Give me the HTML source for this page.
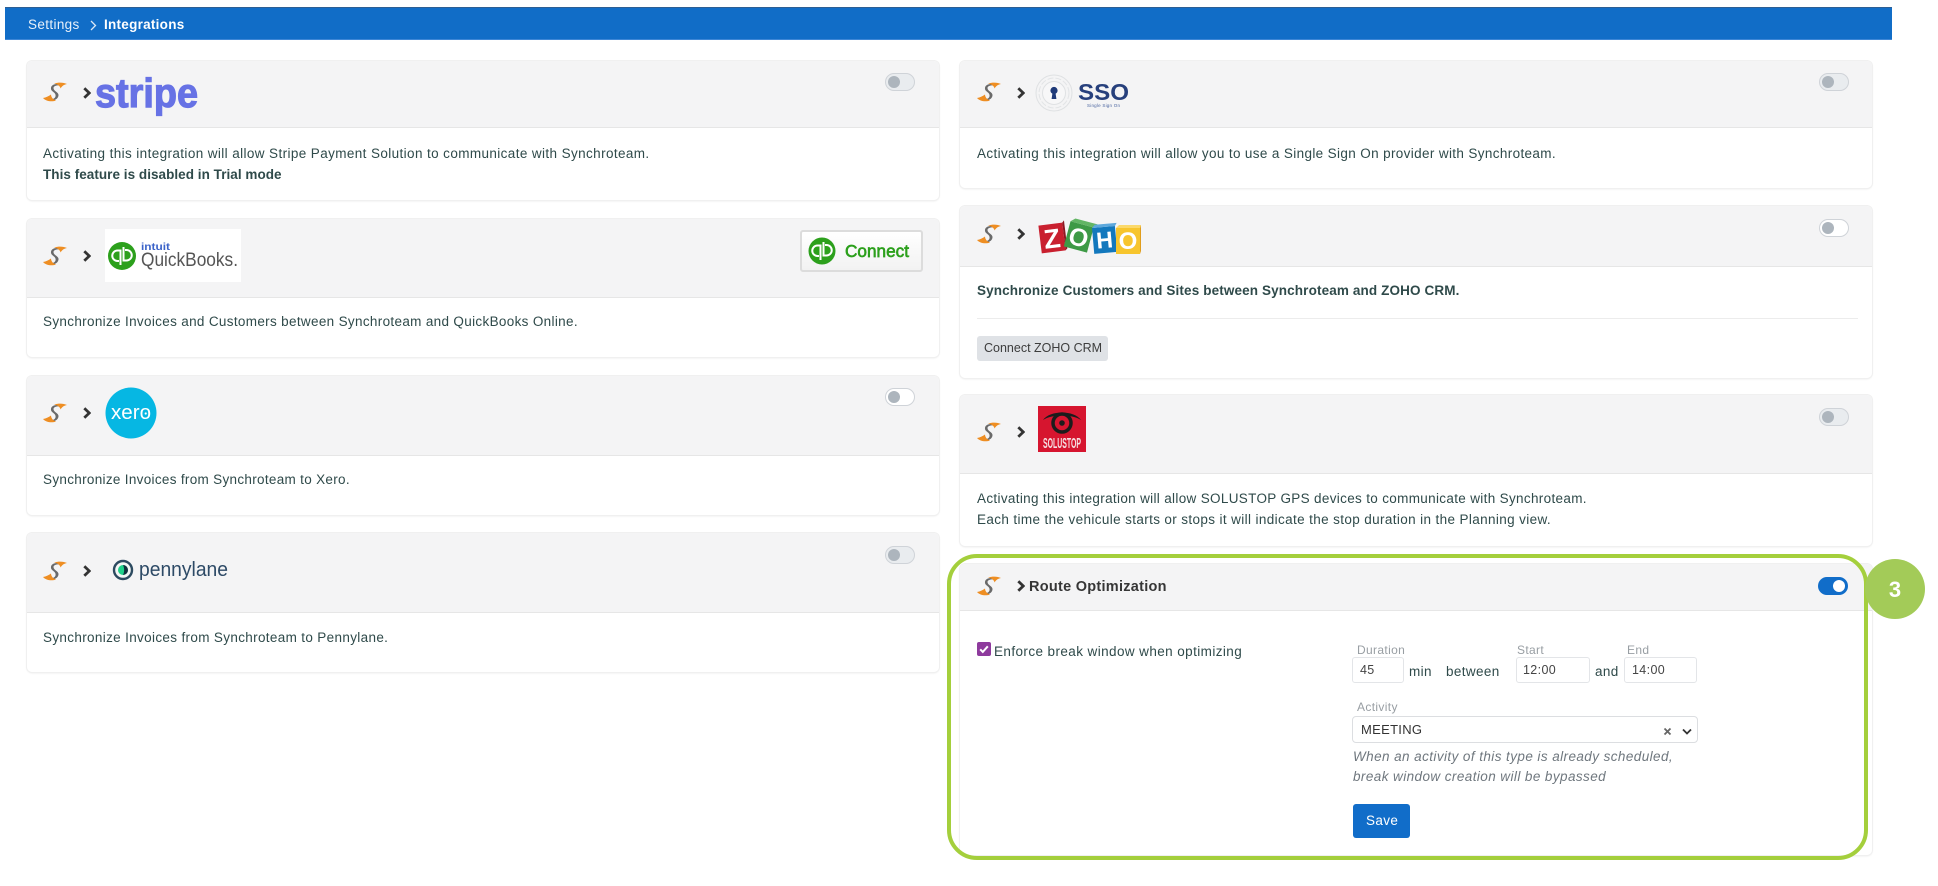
<!DOCTYPE html>
<html lang="en"><head><meta charset="utf-8"><title>Settings - Integrations</title>
<style>
html,body{margin:0;padding:0;background:#fff}
body{width:1938px;height:886px;position:relative;overflow:hidden;font-family:"Liberation Sans",sans-serif;font-size:13.5px;color:#2f4a4a}
#w{position:absolute;left:0;top:0;width:1938px;height:886px;filter:blur(.35px)}
.t{position:absolute;white-space:nowrap;line-height:20px;height:20px;letter-spacing:.36px}
.b{font-weight:700}
.card{position:absolute;background:#fff;border-radius:5px;box-shadow:0 0 0 1px #f0f0f0,0 1px 2px rgba(0,0,0,.1);overflow:hidden;box-sizing:border-box}
.card i{display:block;position:absolute;left:0;right:0;top:0;background:#f4f4f5;border-bottom:1px solid #e6e6e6;box-sizing:border-box}
.tg{position:absolute;width:30px;height:18px;box-sizing:border-box;border-radius:9px;background:#e9ecef;border:1px solid #cfd3d8}
.tg:after{content:"";position:absolute;left:2px;top:2px;width:12px;height:12px;border-radius:50%;background:#adb5bd}
.tg.w{background:#fff}
.tg.on{background:#116dc9;border-color:#116dc9}
.tg.on:after{left:14px;background:#fff}
.abs,svg{position:absolute}
.s{width:24px;height:20px}
.c{width:8px;height:12px}
.in{position:absolute;box-sizing:border-box;height:26px;background:#fff;border:1px solid #e3e5e8;border-radius:3px}
.lb{color:#989ea3;font-size:12px;letter-spacing:.35px}
.ih{color:#6f777e;font-style:italic;font-size:13.5px;letter-spacing:.42px}
.ctl{color:#444;font-size:12.5px}
</style></head>
<body>
<svg width="0" height="0" style="position:absolute">
<symbol id="sl" viewBox="0 0 24 20">
<path d="M17.500 2.500C12 1 7.500 3 8 7C8.500 10 13.500 10.500 12.500 14.500C11.500 17.500 7 18 4 17L5.500 18C10 19.500 15 17.500 15.500 13.500C16 10 10.500 9.500 10.500 6C10.500 3.500 15 3 17 3.500Z" fill="#6a6a6a"/>
<path d="M11 1.500C16 0 21 .5 24 2C21 2.500 19 4 17.500 6.500C17.500 4.500 14.500 2 11 1.500Z" fill="#ee8e23"/>
<path d="M0 16C3 15.500 6 14 8 12.500C8 15 10 17.500 13 18.500C9 20 3 19.500 0 16Z" fill="#ee8e23"/>
</symbol>
<symbol id="ch" viewBox="0 0 8 12"><path d="M1.300 1.200L6.300 6L1.300 10.800" fill="none" stroke="#333" stroke-width="2.800"/></symbol>
</svg>
<div id="w">
<!-- top bar -->
<div class="abs" style="left:5px;top:7px;width:1887px;height:33px;background:#116dc7;box-sizing:border-box;border-top:1px solid #2d5f94;border-bottom:1px solid #3d86d6"></div>
<div class="t" style="left:28px;top:15px;color:#e9f1fa">Settings</div>
<svg style="left:90px;top:20px" width="7" height="11" viewBox="0 0 7 11"><path d="M1 1l4.500 4.500L1 10" fill="none" stroke="#dbe8f6" stroke-width="1.300"/></svg>
<div class="t b" style="left:104px;top:15px;color:#fff;letter-spacing:.27px">Integrations</div>

<!-- left column -->
<div class="card" style="left:27px;top:61px;width:912px;height:139px"><i style="height:67px"></i></div>
<div class="card" style="left:27px;top:219px;width:912px;height:138px"><i style="height:79px"></i></div>
<div class="card" style="left:27px;top:376px;width:912px;height:139px"><i style="height:80px"></i></div>
<div class="card" style="left:27px;top:533px;width:912px;height:139px"><i style="height:80px"></i></div>
<!-- right column -->
<div class="card" style="left:960px;top:61px;width:912px;height:127px"><i style="height:67px"></i></div>
<div class="card" style="left:960px;top:206px;width:912px;height:172px"><i style="height:61px"></i></div>
<div class="card" style="left:960px;top:395px;width:912px;height:151px"><i style="height:79px"></i></div>
<div class="card" style="left:960px;top:564px;width:912px;height:291px"><i style="height:47px"></i></div>

<!-- S logos + chevrons -->
<svg class="s" style="left:43px;top:82px"><use href="#sl"/></svg><svg class="c" style="left:83px;top:87px"><use href="#ch"/></svg>
<svg class="s" style="left:43px;top:246px"><use href="#sl"/></svg><svg class="c" style="left:83px;top:250px"><use href="#ch"/></svg>
<svg class="s" style="left:43px;top:403px"><use href="#sl"/></svg><svg class="c" style="left:83px;top:407px"><use href="#ch"/></svg>
<svg class="s" style="left:43px;top:561px"><use href="#sl"/></svg><svg class="c" style="left:83px;top:565px"><use href="#ch"/></svg>
<svg class="s" style="left:977px;top:82px"><use href="#sl"/></svg><svg class="c" style="left:1017px;top:87px"><use href="#ch"/></svg>
<svg class="s" style="left:977px;top:224px"><use href="#sl"/></svg><svg class="c" style="left:1017px;top:228px"><use href="#ch"/></svg>
<svg class="s" style="left:977px;top:422px"><use href="#sl"/></svg><svg class="c" style="left:1017px;top:426px"><use href="#ch"/></svg>
<svg class="s" style="left:977px;top:576px"><use href="#sl"/></svg><svg class="c" style="left:1017px;top:580px"><use href="#ch"/></svg>

<!-- stripe -->
<svg style="left:90px;top:65px" width="115" height="55"><text x="5" y="42" font-family="Liberation Sans" font-weight="700" font-size="41" fill="#6772e5" stroke="#6772e5" stroke-width="1.200" textLength="103" lengthAdjust="spacingAndGlyphs">stripe</text></svg>

<!-- quickbooks -->
<div class="abs" style="left:105px;top:229px;width:136px;height:53px;background:#fff"></div>
<svg style="left:105px;top:229px" width="136" height="53">
<circle cx="17" cy="27" r="14" fill="#2ca01c"/>
<path d="M15.500 36V21.500h-3a5.200 5.200 0 0 0 0 10.500h1.500M18.500 18v13.500h3a5.200 5.200 0 0 0 0-10.500h-1.500" fill="none" stroke="#fff" stroke-width="2"/>
<text x="36" y="21" font-family="Liberation Sans" font-weight="700" font-size="10" fill="#3b63c9" textLength="29" lengthAdjust="spacingAndGlyphs">intuit</text>
<text x="36" y="37" font-family="Liberation Sans" font-size="19.500" fill="#555" textLength="97" lengthAdjust="spacingAndGlyphs">QuickBooks.</text>
</svg>

<!-- qb connect -->
<div class="abs" style="left:800px;top:230px;width:123px;height:42px;box-sizing:border-box;border:2px solid #dcdcdc;border-radius:3px;background:linear-gradient(#fff,#f2f2f2)"></div>
<svg style="left:806px;top:235px" width="112" height="32">
<circle cx="16" cy="16" r="13.500" fill="#2ca01c"/>
<path d="M14.500 25V10.500h-3a5 5 0 0 0 0 10.500h1.500M17.500 7v13.500h3a5 5 0 0 0 0-10.500h-1.500" fill="none" stroke="#fff" stroke-width="2"/>
<text x="39" y="22" font-family="Liberation Sans" font-size="17.500" fill="#2ca01c" stroke="#2ca01c" stroke-width=".65" textLength="64" lengthAdjust="spacingAndGlyphs">Connect</text>
</svg>

<!-- xero -->
<svg style="left:105px;top:387px" width="52" height="52">
<circle cx="26" cy="26" r="25.500" fill="#06b7e3"/>
<text x="6" y="32" font-family="Liberation Sans" font-size="20" fill="#fff" textLength="40" lengthAdjust="spacingAndGlyphs">xero</text>
<circle cx="40.700" cy="26.500" r="1.100" fill="#fff"/>
</svg>

<!-- pennylane -->
<svg style="left:110px;top:557px" width="125" height="28">
<circle cx="13" cy="13" r="9" fill="#f4f7f6" stroke="#2c4a60" stroke-width="2.400"/>
<circle cx="13" cy="13" r="5" fill="#1fd18a"/>
<path d="M13 8a5 5 0 0 1 0 10c1.500-3 1.500-7 0-10Z" fill="#12303f"/>
<text x="29" y="19" font-family="Liberation Sans" font-size="20" fill="#2d4a66" textLength="89" lengthAdjust="spacingAndGlyphs">pennylane</text>
</svg>

<!-- sso -->
<svg style="left:1034px;top:72px" width="100" height="42">
<circle cx="20" cy="21" r="18" fill="none" stroke="#dfe1e3" stroke-width="1"/>
<circle cx="20" cy="21" r="15" fill="none" stroke="#e2e4e6" stroke-width="1" stroke-dasharray="6 2"/>
<circle cx="20" cy="21" r="11.500" fill="#f7f7f8" stroke="#dfe1e3"/>
<circle cx="20" cy="18.500" r="3.600" fill="#1f3a78"/>
<path d="M18.600 20h2.800l1 7h-4.800Z" fill="#1f3a78"/>
<text x="44" y="28" font-family="Liberation Sans" font-weight="700" font-size="23" fill="#27407c" textLength="51" lengthAdjust="spacingAndGlyphs">SSO</text>
<text x="53" y="35" font-family="Liberation Sans" font-size="4.500" fill="#4c66a0" textLength="33">Single Sign On</text>
</svg>

<!-- zoho -->
<svg style="left:1036px;top:218px" width="108" height="40">
<g font-family="Liberation Sans" font-weight="700" text-anchor="middle" fill="#fff">
<g transform="rotate(-7 16 20)"><rect x="4" y="6" width="24" height="28" fill="#c9202f"/><path d="M28 6l2-2v28l-2 2Z" fill="#8e1722"/><text x="16" y="30" font-size="27">Z</text></g>
<g transform="rotate(15 43 18)"><rect x="31" y="6" width="24" height="26" fill="#3e9a46"/><path d="M31 6l4-4h23l-3 4Z" fill="#62b564"/><text x="43" y="28" font-size="25">O</text></g>
<g transform="rotate(-5 68 21)"><rect x="57" y="9" width="23" height="26" fill="#1378bd"/><path d="M57 9l3-3h22l-2 3Z" fill="#5da8dc"/><text x="68.500" y="30" font-size="23">H</text></g>
<rect x="80" y="10" width="24" height="26" fill="#f7c52d"/><path d="M80 10l3-3h22l-1 3Z" fill="#fbd96b"/><path d="M104 10l1-3v26l-1 3Z" fill="#e09d1c"/><text x="92" y="31" font-size="24">O</text>
</g>
</svg>

<!-- solustop -->
<svg style="left:1038px;top:406px" width="48" height="46">
<rect width="48" height="46" fill="#d6152f"/>
<path d="M5 14C12 4 36 4 43 14C34 8 14 8 5 14Z" fill="#1c1c1c"/>
<circle cx="24" cy="17" r="9" fill="none" stroke="#1c1c1c" stroke-width="3.500"/>
<circle cx="24" cy="17" r="2.800" fill="#1c1c1c"/>
<text x="24" y="42" text-anchor="middle" font-family="Liberation Sans" font-weight="700" font-size="15" fill="#f5dfe2" textLength="38" lengthAdjust="spacingAndGlyphs">SOLUSTOP</text>
</svg>

<!-- toggles -->
<div class="tg" style="left:885px;top:73px"></div>
<div class="tg w" style="left:885px;top:388px"></div>
<div class="tg" style="left:885px;top:546px"></div>
<div class="tg" style="left:1819px;top:73px"></div>
<div class="tg w" style="left:1819px;top:219px"></div>
<div class="tg" style="left:1819px;top:408px"></div>
<div class="tg on" style="left:1818px;top:577px"></div>

<!-- body text -->
<div class="t" style="left:43px;top:144px;letter-spacing:.39px">Activating this integration will allow Stripe Payment Solution to communicate with Synchroteam.</div>
<div class="t b" style="left:43px;top:165px;letter-spacing:.04px">This feature is disabled in Trial mode</div>
<div class="t" style="left:43px;top:312px;letter-spacing:.33px">Synchronize Invoices and Customers between Synchroteam and QuickBooks Online.</div>
<div class="t" style="left:43px;top:470px;letter-spacing:.31px">Synchronize Invoices from Synchroteam to Xero.</div>
<div class="t" style="left:43px;top:628px;letter-spacing:.34px">Synchronize Invoices from Synchroteam to Pennylane.</div>
<div class="t" style="left:977px;top:144px">Activating this integration will allow you to use a Single Sign On provider with Synchroteam.</div>
<div class="t b" style="left:977px;top:281px;letter-spacing:.13px">Synchronize Customers and Sites between Synchroteam and ZOHO CRM.</div>
<div class="abs" style="left:977px;top:318px;width:881px;height:1px;background:#ececec"></div>
<div class="abs" style="left:977px;top:336px;width:131px;height:25px;background:#dfe2e6;border-radius:3px"></div>
<div class="t" style="left:984px;top:338px;color:#3d3d3d;font-size:12.500px;letter-spacing:0">Connect ZOHO CRM</div>
<div class="t" style="left:977px;top:489px;letter-spacing:.33px">Activating this integration will allow SOLUSTOP GPS devices to communicate with Synchroteam.</div>
<div class="t" style="left:977px;top:510px;letter-spacing:.37px">Each time the vehicule starts or stops it will indicate the stop duration in the Planning view.</div>

<!-- route optimization -->
<div class="t b" style="left:1029px;top:577px;font-size:14.500px;color:#363636;letter-spacing:.27px">Route Optimization</div>
<svg style="left:977px;top:642px" width="14" height="14"><rect width="14" height="14" rx="2" fill="#8e3a9d"/><path d="M3.200 7.300l2.600 2.600 5-5.600" fill="none" stroke="#fff" stroke-width="2"/></svg>
<div class="t" style="left:994px;top:642px;letter-spacing:.41px">Enforce break window when optimizing</div>

<div class="t lb" style="left:1357px;top:640px">Duration</div>
<div class="t lb" style="left:1517px;top:640px">Start</div>
<div class="t lb" style="left:1627px;top:640px">End</div>
<div class="in" style="left:1352px;top:657px;width:52px"></div>
<div class="t ctl" style="left:1360px;top:660px">45</div>
<div class="t" style="left:1409px;top:662px">min</div>
<div class="t" style="left:1446px;top:662px">between</div>
<div class="in" style="left:1516px;top:657px;width:74px"></div>
<div class="t ctl" style="left:1523px;top:660px">12:00</div>
<div class="t" style="left:1595px;top:662px">and</div>
<div class="in" style="left:1624px;top:657px;width:73px"></div>
<div class="t ctl" style="left:1632px;top:660px">14:00</div>

<div class="t lb" style="left:1357px;top:697px">Activity</div>
<div class="in" style="left:1352px;top:716px;width:346px;height:27px;border:1.500px solid #dcdee1;border-radius:4px"></div>
<div class="t" style="left:1361px;top:720px;color:#333;font-size:13px;letter-spacing:.3px">MEETING</div>
<svg style="left:1663px;top:727px" width="32" height="10"><path d="M1.500 1.500l6 6M7.500 1.500l-6 6" stroke="#666" stroke-width="1.800"/><path d="M20 2.500l4 4 4-4" fill="none" stroke="#333" stroke-width="1.800"/></svg>
<div class="t ih" style="left:1353px;top:747px">When an activity of this type is already scheduled,</div>
<div class="t ih" style="left:1353px;top:767px">break window creation will be bypassed</div>
<div class="abs" style="left:1353px;top:804px;width:57px;height:34px;background:#116dc9;border-radius:3px"></div>
<div class="t" style="left:1366px;top:811px;color:#fff">Save</div>

<!-- annotation -->
<div class="abs" style="left:947px;top:554px;width:921px;height:306px;box-sizing:border-box;border:4px solid #a4cf3c;border-radius:30px"></div>
<div class="abs" style="left:1865px;top:559px;width:60px;height:60px;border-radius:50%;background:#a3cb58"></div>
<div class="t b" style="left:1865px;top:580px;width:60px;text-align:center;color:#fff;font-size:22px;letter-spacing:0">3</div>
</div>
</body></html>
